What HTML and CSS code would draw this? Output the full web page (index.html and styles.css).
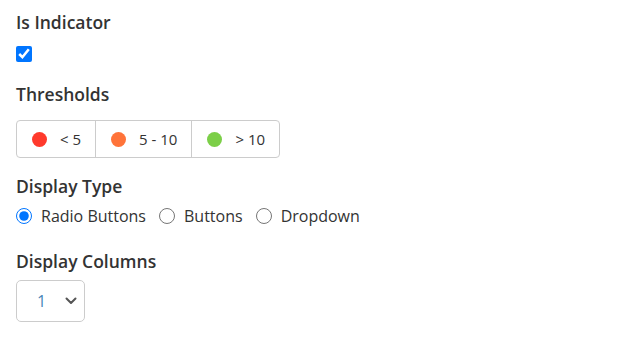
FILE: index.html
```html
<!DOCTYPE html>
<html>
<head>
<meta charset="utf-8">
<link rel="stylesheet" href="styles.css">
</head>
<body>
<div class="form">
  <div class="group g-indicator">
    <div class="label">Is Indicator</div>
    <input type="checkbox" class="check" checked>
  </div>
  <div class="group g-thresholds">
    <div class="label">Thresholds</div>
    <div class="thresholds">
      <div class="th"><span class="dot red"></span><span>&lt; 5</span></div>
      <div class="th"><span class="dot orange"></span><span>5 - 10</span></div>
      <div class="th"><span class="dot green"></span><span>&gt; 10</span></div>
    </div>
  </div>
  <div class="group g-type">
    <div class="label">Display Type</div>
    <div class="radios">
      <label class="radio"><input type="radio" name="dt" checked><span>Radio Buttons</span></label>
      <label class="radio"><input type="radio" name="dt"><span>Buttons</span></label>
      <label class="radio"><input type="radio" name="dt"><span>Dropdown</span></label>
    </div>
  </div>
  <div class="group g-columns">
    <div class="label">Display Columns</div>
    <div class="select">
      <span class="sel-value">1</span>
      <svg class="chev" width="12" height="8" viewBox="0 0 12 8"><path d="M1.5 1.5 L6 6 L10.5 1.5" fill="none" stroke="#555" stroke-width="2" stroke-linecap="round" stroke-linejoin="round"/></svg>
    </div>
  </div>
</div>
</body>
</html>
```
FILE: styles.css
```css
html, body {
  margin: 0;
  padding: 0;
  background: #fff;
}
body {
  font-family: "Open Sans", "Noto Sans", sans-serif;
  color: #333;
}
.form {
  display: flex;
  flex-direction: column;
  padding: 10px 16px 0 16px;
}
.group {
  display: flex;
  flex-direction: column;
  align-items: flex-start;
}
.label {
  font-size: 17.5px;
  font-weight: 600;
  line-height: 24px;
  color: #333;
}
.g-indicator .label { margin-bottom: 12px; }
.check {
  margin: 0;
  width: 16px;
  height: 16px;
  accent-color: #0075ff;
}
.g-thresholds { margin-top: 20px; }
.g-thresholds .label { margin-bottom: 14px; }
.thresholds {
  display: flex;
  border: 1px solid #ccc;
  border-radius: 4px;
  height: 36px;
}
.th {
  display: flex;
  align-items: center;
  gap: 13px;
  padding: 0 14px 0 15px;
  font-size: 15px;
  color: #333;
  border-right: 1px solid #ccc;
}
.th:last-child { border-right: none; }
.dot {
  width: 15px;
  height: 15px;
  border-radius: 50%;
  display: inline-block;
}
.red { background: #ff3a2c; }
.orange { background: #ff7339; }
.green { background: #7ccf48; }
.g-type { margin-top: 16px; }
.g-type .label { margin-bottom: 6px; }
.radios {
  display: flex;
  align-items: center;
  gap: 13px;
  height: 24px;
}
.radio {
  display: flex;
  align-items: center;
  gap: 9px;
  font-size: 16px;
  color: #333;
}
.radio input {
  margin: 0;
  width: 16px;
  height: 16px;
  accent-color: #0075ff;
}
.g-columns { margin-top: 21px; }
.g-columns .label { margin-bottom: 7px; }
.select {
  box-sizing: border-box;
  width: 69px;
  height: 42px;
  border: 1px solid #ccc;
  border-radius: 5px;
  display: flex;
  align-items: center;
  justify-content: space-between;
  padding: 0 7px 0 20px;
  font-size: 16px;
  color: #4a86b8;
}
.chev { display: block; }
```
